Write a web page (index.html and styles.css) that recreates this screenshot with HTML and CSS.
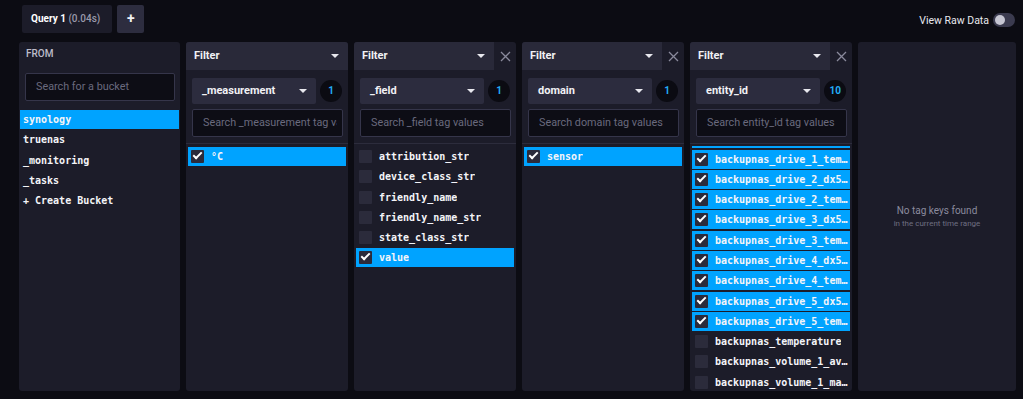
FILE: index.html
```html
<!DOCTYPE html>
<html lang="en">
<head>
    <meta charset="UTF-8">
    <title>Query Builder</title>
    <link rel="stylesheet" href="styles.css">
</head>
<body>
    <div class="topbar">
        <div class="tab"><b>Query 1</b> <span class="time">(0.04s)</span></div>
        <div class="add-tab">+</div>
        <div class="raw">View Raw Data <span class="toggle"><span class="knob"></span></span></div>
    </div>

    <div class="builder">
        <div class="col from">
            <div class="from-title">FROM</div>
            <div class="search from-search"><span>Search for a bucket</span></div>
            <div class="list">
                <div class="item sel">synology</div>
                <div class="item">truenas</div>
                <div class="item">_monitoring</div>
                <div class="item">_tasks</div>
                <div class="item">+ Create Bucket</div>
            </div>
        </div>

        <div class="col">
            <div class="head">
                <div class="filter wide">Filter <span class="caret"></span></div>
            </div>
            <div class="keyrow">
                <div class="key">_measurement <span class="caret"></span></div>
                <div class="badge">1</div>
            </div>
            <div class="search"><span>Search _measurement tag values</span></div>
            <div class="list">
                <div class="item sel"><span class="cb on"></span><span class="txt">°C</span></div>
            </div>
        </div>

        <div class="col">
            <div class="head">
                <div class="filter">Filter <span class="caret"></span></div>
                <div class="close"><svg width="11" height="11" viewBox="0 0 11 11"><path d="M1 1L10 10M10 1L1 10" stroke="#8a8a9c" stroke-width="1.3"/></svg></div>
            </div>
            <div class="keyrow">
                <div class="key">_field <span class="caret"></span></div>
                <div class="badge">1</div>
            </div>
            <div class="search"><span>Search _field tag values</span></div>
            <div class="list">
                <div class="item"><span class="cb"></span><span class="txt">attribution_str</span></div>
                <div class="item"><span class="cb"></span><span class="txt">device_class_str</span></div>
                <div class="item"><span class="cb"></span><span class="txt">friendly_name</span></div>
                <div class="item"><span class="cb"></span><span class="txt">friendly_name_str</span></div>
                <div class="item"><span class="cb"></span><span class="txt">state_class_str</span></div>
                <div class="item sel"><span class="cb on"></span><span class="txt">value</span></div>
            </div>
        </div>

        <div class="col">
            <div class="head">
                <div class="filter">Filter <span class="caret"></span></div>
                <div class="close"><svg width="11" height="11" viewBox="0 0 11 11"><path d="M1 1L10 10M10 1L1 10" stroke="#8a8a9c" stroke-width="1.3"/></svg></div>
            </div>
            <div class="keyrow">
                <div class="key">domain <span class="caret"></span></div>
                <div class="badge">1</div>
            </div>
            <div class="search"><span>Search domain tag values</span></div>
            <div class="list">
                <div class="item sel"><span class="cb on"></span><span class="txt">sensor</span></div>
            </div>
        </div>

        <div class="col">
            <div class="head">
                <div class="filter">Filter <span class="caret"></span></div>
                <div class="close"><svg width="11" height="11" viewBox="0 0 11 11"><path d="M1 1L10 10M10 1L1 10" stroke="#8a8a9c" stroke-width="1.3"/></svg></div>
            </div>
            <div class="keyrow">
                <div class="key">entity_id <span class="caret"></span></div>
                <div class="badge">10</div>
            </div>
            <div class="search"><span>Search entity_id tag values</span></div>
            <div class="list scrolled">
                <div class="sliver"></div>
                <div class="item sel"><span class="cb on"></span><span class="txt">backupnas_drive_1_temperature</span></div>
                <div class="item sel"><span class="cb on"></span><span class="txt">backupnas_drive_2_dx517_temperature</span></div>
                <div class="item sel"><span class="cb on"></span><span class="txt">backupnas_drive_2_temperature</span></div>
                <div class="item sel"><span class="cb on"></span><span class="txt">backupnas_drive_3_dx517_temperature</span></div>
                <div class="item sel"><span class="cb on"></span><span class="txt">backupnas_drive_3_temperature</span></div>
                <div class="item sel"><span class="cb on"></span><span class="txt">backupnas_drive_4_dx517_temperature</span></div>
                <div class="item sel"><span class="cb on"></span><span class="txt">backupnas_drive_4_temperature</span></div>
                <div class="item sel"><span class="cb on"></span><span class="txt">backupnas_drive_5_dx517_temperature</span></div>
                <div class="item sel"><span class="cb on"></span><span class="txt">backupnas_drive_5_temperature</span></div>
                <div class="item"><span class="cb"></span><span class="txt">backupnas_temperature</span></div>
                <div class="item"><span class="cb"></span><span class="txt">backupnas_volume_1_available</span></div>
                <div class="item"><span class="cb"></span><span class="txt">backupnas_volume_1_mass</span></div>
            </div>
        </div>

        <div class="col empty">
            <div class="empty-msg">No tag keys found</div>
            <div class="empty-sub">in the current time range</div>
        </div>
    </div>
</body>
</html>
```

FILE: styles.css
```css
body {
    margin: 0;
    background-color: #0c0c13;
    font-family: Roboto, "Noto Sans", Arial, sans-serif;
    color: #f1f1f5;
    height: 399px;
    overflow: hidden;
}
.topbar {
    display: flex;
    align-items: center;
    height: 28px;
    padding: 5px 8px 0 22px;
}
.tab {
    height: 28px;
    line-height: 28px;
    padding: 0 12px 0 9px;
    background-color: #1c1c29;
    font-size: 10px;
    border-radius: 2px;
}
.tab b { color: #fff; }
.time { color: #9a9aab; font-weight: 500; }
.add-tab {
    width: 27px;
    height: 28px;
    line-height: 27px;
    margin-left: 5px;
    background-color: #2d2d3f;
    text-align: center;
    font-weight: bold;
    font-size: 14px;
    border-radius: 2px;
}
.raw {
    margin-left: auto;
    display: flex;
    align-items: center;
    font-size: 10.5px;
    color: #e8e8ee;
    margin-top: 2px;
}
.toggle {
    width: 22px;
    height: 14px;
    margin-left: 4px;
    border-radius: 7px;
    background-color: #3b3b4f;
    position: relative;
}
.knob {
    position: absolute;
    left: 2px;
    top: 2px;
    width: 10px;
    height: 10px;
    border-radius: 50%;
    background-color: #c6c6d2;
}
.builder {
    display: flex;
    gap: 6px;
    padding: 9px 7px 0 19px;
    height: 349px;
}
.col {
    width: 162px;
    flex: none;
    background-color: #1c1c29;
    border-radius: 3px;
    overflow: hidden;
    display: flex;
    flex-direction: column;
}
.col.from { width: 161px; }
.col.empty {
    flex: 1;
    justify-content: center;
    align-items: center;
}
.from-title {
    font-size: 10px;
    font-weight: 500;
    color: #bdbdca;
    padding: 6px 7px 0;
    height: 18px;
}
.head {
    display: flex;
    height: 28px;
}
.filter {
    width: 140px;
    background-color: #292939;
    font-size: 11px;
    font-weight: bold;
    line-height: 28px;
    padding-left: 8px;
    box-sizing: border-box;
    position: relative;
}
.filter.wide { width: 100%; }
.close {
    flex: 1;
    display: flex;
    align-items: center;
    justify-content: center;
}
.caret {
    position: absolute;
    right: 9px;
    top: 12px;
    border-left: 4px solid transparent;
    border-right: 4px solid transparent;
    border-top: 4px solid #e8e8ee;
}
.keyrow {
    display: flex;
    align-items: center;
    padding: 8px 6px 0;
}
.key {
    position: relative;
    width: 126px;
    height: 26px;
    line-height: 26px;
    background-color: #2c2c3e;
    font-size: 11px;
    font-weight: bold;
    padding-left: 10px;
    box-sizing: border-box;
    border-radius: 2px;
}
.key .caret { top: 11px; right: 9px; }
.badge {
    width: 22px;
    height: 22px;
    margin-left: 4px;
    border-radius: 50%;
    background-color: #0b0b12;
    color: #22adf6;
    font-size: 10px;
    font-weight: bold;
    text-align: center;
    line-height: 22px;
}
.search {
    margin: 5px 5px 0 6px;
    height: 26px;
    line-height: 26px;
    background-color: #0d0d15;
    border: 1px solid #35354a;
    border-radius: 2px;
    color: #6a6a7e;
    font-size: 10.8px;
    padding: 0 5px 0 10px;
}
.search span {
    display: block;
    white-space: nowrap;
    overflow: hidden;
}
.from-search { margin: 7px 5px 0 6px; }
.list {
    border-top: 1px solid #2c2c3c;
    margin-top: 6px;
    padding: 3px 2px 0;
}
.from .list {
    border-top: none;
    margin-top: 9px;
    padding: 0 1px;
}
.item {
    height: 19px;
    margin-bottom: 1.3px;
    display: flex;
    align-items: center;
    padding-left: 3px;
    font-family: "DejaVu Sans Mono", "Liberation Mono", monospace;
    font-weight: bold;
    font-size: 10px;
    white-space: nowrap;
    color: #f4f4f8;
}
.item.sel { background-color: #00a3ff; }
.txt {
    overflow: hidden;
    text-overflow: ellipsis;
    margin-left: 7px;
    line-height: 15px;
}
.cb {
    flex: none;
    width: 13px;
    height: 13px;
    background-color: #2b2b3b;
    border-radius: 1px;
    position: relative;
}
.cb.on::after {
    content: "";
    position: absolute;
    left: 2px;
    top: 2px;
    width: 7px;
    height: 3px;
    border-left: 2px solid #fff;
    border-bottom: 2px solid #fff;
    transform: rotate(-45deg);
}
.list.scrolled { padding-top: 2px; }
.sliver {
    height: 2px;
    background-color: #00a3ff;
    margin-bottom: 1.5px;
}
.empty-msg {
    font-size: 10px;
    line-height: 12px;
    color: #8b8b9e;
}
.empty-sub {
    font-size: 8px;
    line-height: 10px;
    color: #6f6f82;
    margin-top: 2px;
}
```
